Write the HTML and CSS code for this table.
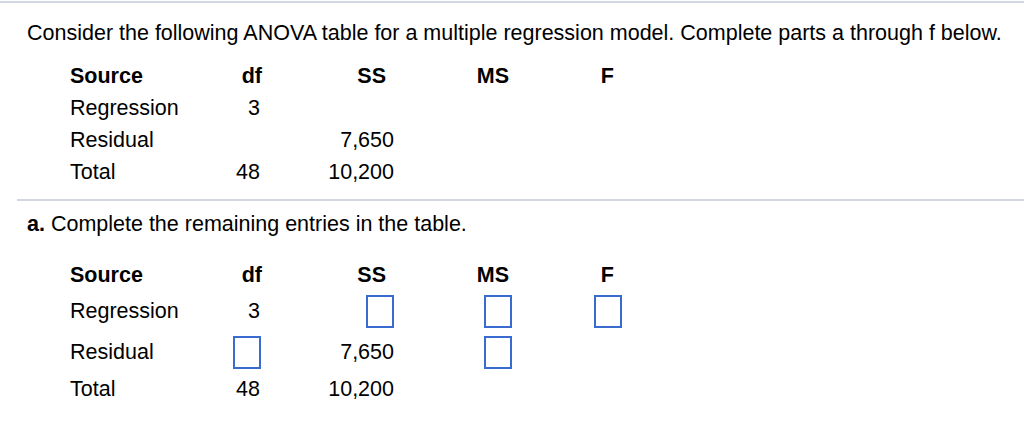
FILE: index.html
```html
<!DOCTYPE html>
<html lang="en">
<head>
<meta charset="utf-8">
<title>ANOVA table</title>
<link rel="stylesheet" href="styles.css">
</head>
<body>
<div class="topline"></div>
<section class="block first">
  <p class="prompt">Consider the following ANOVA table for a multiple regression model. Complete parts a through f below.</p>
  <div class="anova">
    <div class="hd src">Source</div><div class="hd df">df</div><div class="hd ss">SS</div><div class="hd ms">MS</div><div class="hd f">F</div>
    <div class="src">Regression</div><div class="num df">3</div><div class="num ss"></div><div class="ms"></div><div class="f"></div>
    <div class="src">Residual</div><div class="num df"></div><div class="num ss">7,650</div><div class="ms"></div><div class="f"></div>
    <div class="src">Total</div><div class="num df">48</div><div class="num ss">10,200</div><div class="ms"></div><div class="f"></div>
  </div>
</section>
<hr class="divider">
<section class="block second">
  <p class="prompt"><b>a.</b> Complete the remaining entries in the table.</p>
  <div class="anova answer">
    <div class="hd src">Source</div><div class="hd df">df</div><div class="hd ss">SS</div><div class="hd ms">MS</div><div class="hd f">F</div>
    <div class="src">Regression</div><div class="num df">3</div><div class="num ss"><span class="box"></span></div><div class="ms"><span class="box"></span></div><div class="f"><span class="box"></span></div>
    <div class="src">Residual</div><div class="num df"><span class="box"></span></div><div class="num ss">7,650</div><div class="ms"><span class="box"></span></div><div class="f"></div>
    <div class="src">Total</div><div class="num df">48</div><div class="num ss">10,200</div><div class="ms"></div><div class="f"></div>
  </div>
</section>
</body>
</html>
```
FILE: styles.css
```css
html, body {
  margin: 0;
  padding: 0;
  background: #fff;
}
body {
  font-family: "Liberation Sans", Arial, Helvetica, sans-serif;
  font-size: 21.5px;
  color: #000;
}
.topline {
  margin-top: 1px;
  height: 2px;
  background: #d3d7e2;
}
.block {
  padding-left: 27px;
}
.first {
  padding-top: 18px;
}
.prompt {
  margin: 0;
  line-height: 24px;
}
.prompt b {
  font-weight: bold;
}
.anova {
  display: grid;
  grid-template-columns: 130px 62px 132px 118px 110px;
  grid-auto-rows: 32px;
  margin-left: 43px;
  margin-top: 15px;
}
.anova > div {
  display: flex;
  align-items: center;
}
.hd {
  font-weight: bold;
}
.df, .ss, .ms, .f {
  justify-content: flex-end;
}
.num.df {
  padding-right: 2px;
}
.hd.ss {
  padding-right: 8px;
}
.hd.ms {
  padding-right: 3px;
}
.hd.f {
  padding-right: 8px;
}
.divider {
  border: 0;
  height: 2px;
  background: #d3d7e2;
  margin: 11px 0 0 17px;
}
.second {
  padding-top: 11px;
}
.answer {
  margin-top: 23px;
  grid-template-rows: 32px 41px 41px 32px;
}
.answer .df .box {
  margin-right: -1px;
}
.box {
  display: block;
  box-sizing: border-box;
  width: 28px;
  height: 33px;
  border: 2px solid #3a6bd0;
  background: #fff;
}
```
